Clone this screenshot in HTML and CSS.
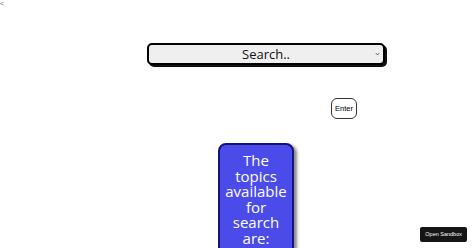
FILE: index.html
```html
<!DOCTYPE html>
<html>
<head>
<meta charset="utf-8">
<link rel="stylesheet" href="styles.css">
</head>
<body>
<div class="back">&lt;</div>
<div class="search-row">
  <select class="search">
    <option>Search..</option>
  </select>
</div>
<div class="enter-row">
  <button class="enter">Enter</button>
</div>
<div class="card-row">
  <div class="card">The topics available for search are:</div>
</div>
<a class="sandbox">Open Sandbox</a>
</body>
</html>
```
FILE: styles.css
```css
html, body {
  margin: 0;
  padding: 0;
  background: #ffffff;
  overflow: hidden;
  height: 248px;
}
body {
  font-family: "Open Sans", "Liberation Sans", sans-serif;
}
.back {
  font-family: "Liberation Sans", sans-serif;
  font-size: 7px;
  line-height: 8px;
  color: #777;
  height: 8px;
}
.search-row {
  padding-top: 35px;
  padding-left: 147px;
  height: 22px;
}
.search {
  display: block;
  width: 238px;
  height: 22px;
  box-sizing: border-box;
  border: 2px solid #000;
  border-radius: 5px;
  box-shadow: 2px 2px 0 #111;
  background-color: #efefef;
  background-image: url("data:image/svg+xml,%3Csvg xmlns='http://www.w3.org/2000/svg' width='6' height='4' viewBox='0 0 6 4'%3E%3Cpath d='M1 1l2 2 2-2' fill='none' stroke='%23333' stroke-width='1'/%3E%3C/svg%3E");
  background-repeat: no-repeat;
  background-position: right 3px center;
  background-size: 5px 4px;
  -webkit-appearance: none;
  appearance: none;
  font-family: "Open Sans", "Liberation Sans", sans-serif;
  font-size: 13px;
  line-height: 18px;
  color: #111;
  text-align: center;
  text-align-last: center;
  padding: 0 4px 1px;
}
.enter-row {
  padding-top: 33px;
  padding-left: 331px;
  height: 21px;
}
.enter {
  display: block;
  width: 26px;
  height: 21px;
  box-sizing: border-box;
  border: 1px solid #333;
  border-radius: 6px;
  background: #fff;
  font-family: "Liberation Sans", sans-serif;
  font-size: 7.5px;
  color: #000;
  padding: 0;
}
.card-row {
  padding-top: 24px;
  padding-left: 218px;
}
.card {
  width: 76px;
  box-sizing: border-box;
  background: #4b4be9;
  border: 2px solid #13137a;
  border-radius: 8px;
  box-shadow: 3px 2px 3px rgba(0,0,0,0.45);
  color: #fff;
  font-size: 15px;
  line-height: 15.5px;
  text-align: center;
  padding: 8px 3px 8px;
  word-spacing: 40px;
}
.sandbox {
  position: fixed;
  right: 7px;
  bottom: 6px;
  background: #151515;
  color: #fff;
  font-family: "Liberation Sans", sans-serif;
  font-size: 5.5px;
  line-height: 15px;
  padding: 0 5px;
  border-radius: 2px;
}
```
